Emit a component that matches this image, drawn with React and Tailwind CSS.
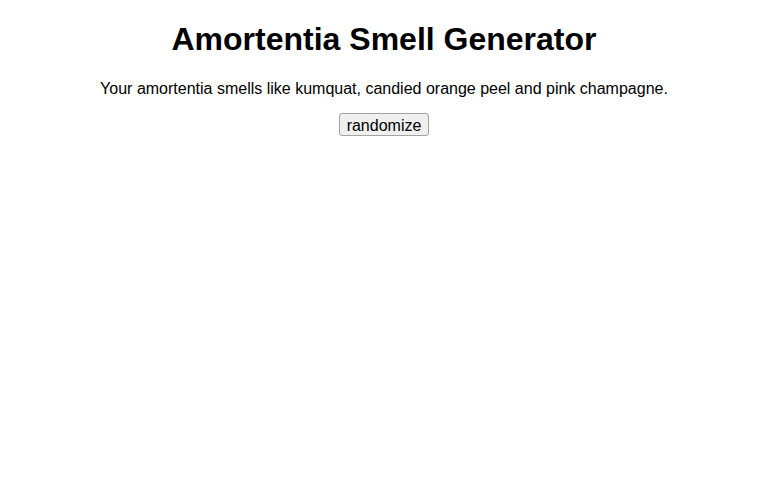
import { useState } from "react";

const smells = [
  "kumquat, candied orange peel and pink champagne",
  "fresh parchment, broomstick handle and spearmint toothpaste",
  "treacle tart, wood smoke and rain on cobblestones",
];

export default function App() {
  const [index, setIndex] = useState(0);

  const randomize = () => {
    setIndex(Math.floor(Math.random() * smells.length));
  };

  return (
    <div className="min-h-screen bg-white text-center text-black font-['Liberation_Sans',Arial,sans-serif]">
      <h1 className="pt-[21px] text-[32px] leading-[37px] font-bold">Amortentia Smell Generator</h1>
      <p className="mt-[22px] text-base leading-[18px]">
        Your amortentia smells like {smells[index]}.
      </p>
      <div className="mt-[15px]">
        <button
          type="button"
          onClick={randomize}
          className="rounded-[3px] border border-[#a3a3a3] bg-[#efefef] px-[7px] pt-[2px] pb-0 text-base leading-[19px] text-black"
        >
          randomize
        </button>
      </div>
    </div>
  );
}
